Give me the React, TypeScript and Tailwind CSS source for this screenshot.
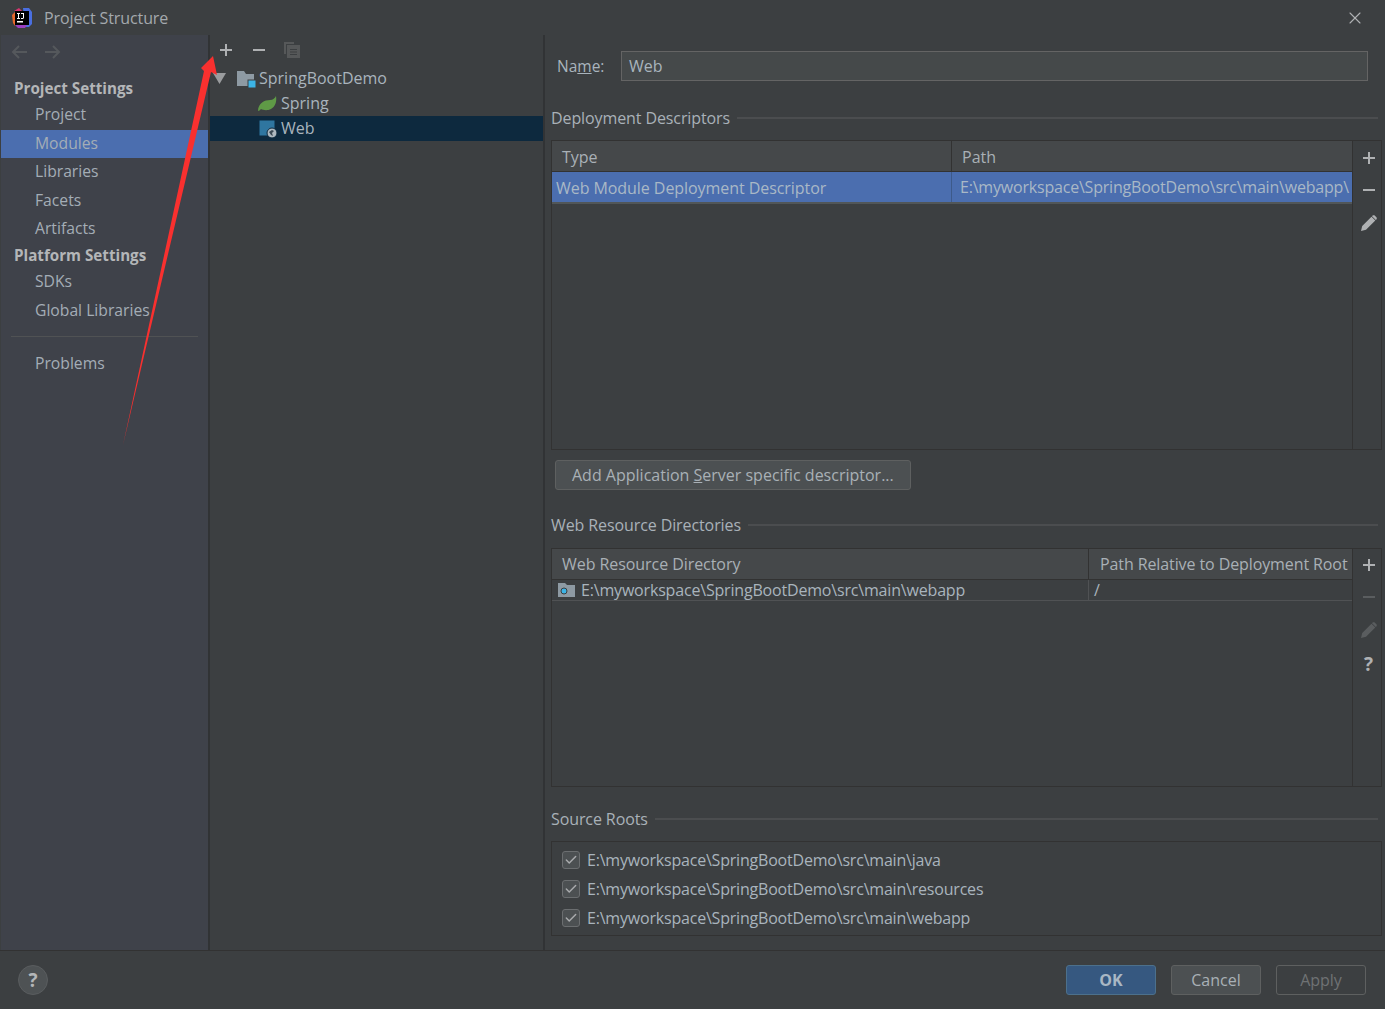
import { Check, X } from 'lucide-react'

const font = { fontFamily: '"Open Sans", "Noto Sans", sans-serif' }

function Plus({ dim = false }: { dim?: boolean }) {
  return (
    <svg width="16" height="16" viewBox="0 0 16 16" className={dim ? 'text-[#5a5d5f]' : 'text-[#afb1b3]'}>
      <path d="M7 2h2v5h5v2H9v5H7V9H2V7h5z" fill="currentColor" />
    </svg>
  )
}

function Minus({ dim = false }: { dim?: boolean }) {
  return (
    <svg width="16" height="16" viewBox="0 0 16 16" className={dim ? 'text-[#5a5d5f]' : 'text-[#afb1b3]'}>
      <path d="M2 7h12v2H2z" fill="currentColor" />
    </svg>
  )
}

function Pencil({ dim = false }: { dim?: boolean }) {
  return (
    <svg width="18" height="18" viewBox="0 0 18 18" className={dim ? 'text-[#5a5d5f]' : 'text-[#afb1b3]'}>
      <path d="M1 17l1.2-5L11.500 2.700l3.800 3.800L6 15.800zM12.600 1.600c.6-.6 1.500-.6 2.100 0l1.700 1.700c.6.6.6 1.500 0 2.100l-.6.6-3.800-3.800z" fill="currentColor" />
    </svg>
  )
}

function SectionTitle({ title }: { title: string }) {
  return (
    <div className="flex items-center h-5 mr-1">
      <span className="text-[16px] tracking-[-0.100px] text-[#a9b1b8] whitespace-nowrap">{title}</span>
      <div className="flex-1 h-[2px] bg-[#4b4d4f] ml-[7px]" />
    </div>
  )
}

function NavItem({ label, selected = false }: { label: string; selected?: boolean }) {
  return (
    <div className={`h-[28.500px] flex items-center pl-[34px] text-[15.700px] text-[#a4adb6] ${selected ? 'bg-[#4b6eaf]' : ''}`}>
      {label}
    </div>
  )
}

function NavHeading({ label }: { label: string }) {
  return <div className="h-[24.500px] flex items-center pl-[13px] text-[15.200px] font-bold text-[#b4b6b8]">{label}</div>
}

function SourceRoot({ path }: { path: string }) {
  return (
    <div className="h-[29px] flex items-center pl-[10px]">
      <div className="w-[18px] h-[18px] rounded-[3px] border border-[#6b6e70] bg-[#4c5052] flex items-center justify-center">
        <Check size={14} strokeWidth={2.500} className="text-[#a9abad]" />
      </div>
      <span className="ml-[7px] text-[16px] tracking-[-0.200px] text-[#a9b4bd] whitespace-nowrap">{path}</span>
    </div>
  )
}

export default function App() {
  return (
    <div className="relative w-[1385px] h-[1009px] overflow-hidden bg-[#3c3f41] flex flex-col" style={font}>
      {/* Title bar */}
      <div className="h-[35px] flex items-center shrink-0">
        <svg width="22" height="22" viewBox="0 0 22 22" className="ml-[11px]">
          <path d="M3 4l5-3 3 3H5z" fill="#d6356f" />
          <path d="M12 1h6l3 4v12l-3 3h-4z" fill="#4a6fe0" />
          <path d="M1 8l3-3v14l-2-3z" fill="#e8672b" />
          <path d="M4 18h12l-2 3H7z" fill="#9b3fc0" />
          <rect x="4" y="4" width="14" height="14" fill="#000" />
          <rect x="6" y="14" width="6" height="1.500" fill="#fff" />
          <path d="M6 6h3v1H8v4h1v1H6v-1h1V7H6zM10 6h3v5l-1 1h-2v-1h2V7h-2z" fill="#fff" />
        </svg>
        <span className="ml-[11px] text-[16px] tracking-[-0.100px] text-[#a4a9ad]">Project Structure</span>
        <X size={20} strokeWidth={1.300} className="ml-auto mr-[20px] text-[#b0b2b4]" />
      </div>

      {/* Body */}
      <div className="h-[915px] flex shrink-0">
        {/* Sidebar */}
        <div className="w-[207px] ml-px bg-[#3f424a] shrink-0">
          <div className="h-[41.500px] flex items-start pt-[10px] pl-[10px] gap-[16px] text-[#55585c]">
            <svg width="17" height="14" viewBox="0 0 17 14"><path d="M8 1L2 7l6 6M2 7h14" fill="none" stroke="currentColor" strokeWidth="2" /></svg>
            <svg width="17" height="14" viewBox="0 0 17 14"><path d="M9 1l6 6-6 6M15 7H1" fill="none" stroke="currentColor" strokeWidth="2" /></svg>
          </div>
          <NavHeading label="Project Settings" />
          <NavItem label="Project" />
          <NavItem label="Modules" selected />
          <NavItem label="Libraries" />
          <NavItem label="Facets" />
          <NavItem label="Artifacts" />
          <NavHeading label="Platform Settings" />
          <NavItem label="SDKs" />
          <NavItem label="Global Libraries" />
          <div className="h-px bg-[#505254] mx-[10px] mt-[11px] mb-[13px]" />
          <NavItem label="Problems" />
        </div>
        <div className="w-[2px] bg-[#313335] shrink-0" />

        {/* Module tree */}
        <div className="w-[333px] shrink-0">
          <div className="h-[30px] flex items-center pl-[8px] gap-[17px]">
            <Plus />
            <Minus />
            <svg width="18" height="18" viewBox="0 0 18 18" className="-ml-[1px]">
              <path d="M1 1h10v2H3v10H1z" fill="#565859" />
              <path d="M4 4h13v13H4z" fill="#565859" />
              <path d="M7 8h7v1H7zM7 10.500h7v1H7zM7 13h7v1H7z" fill="#3c3f41" />
            </svg>
          </div>
          <div className="h-[25px] mt-px flex items-center pl-[3px] text-[#a9b4bd] text-[16px]">
            <svg width="13" height="11" viewBox="0 0 13 11"><path d="M0 0h13L6.500 11z" fill="#9a9c9e" /></svg>
            <svg width="20" height="18" viewBox="0 0 20 18" className="ml-[10px]">
              <path d="M1 1h7l2 3h8v12H1z" fill="#8e9aa3" />
              <rect x="12" y="10" width="8" height="8" fill="#3cb4e6" stroke="#3c3f41" />
            </svg>
            <span className="ml-[3px] pb-[2px]">SpringBootDemo</span>
          </div>
          <div className="h-[25px] flex items-center pl-[48px] text-[#a9b4bd] text-[16px]">
            <svg width="19" height="16" viewBox="0 0 19 16">
              <path d="M0 15C0 7 7 4 12 4 15 4 17 2 18 0c1 6-1 11-5 13-4 2-8 1-10 0-1 1-2 2-3 2z" fill="#5f9a46" />
            </svg>
            <span className="ml-[4px] pb-px">Spring</span>
          </div>
          <div className="h-[25px] bg-[#0d293e] flex items-center pl-[49px] text-[#a9b4bd] text-[16px]">
            <div className="relative w-[17px] h-[18px]">
              <svg width="18" height="18" viewBox="0 0 18 18">
                <rect x="0.500" y="0.500" width="15" height="15" fill="#2f76a0" />
                <circle cx="13" cy="13" r="5" fill="#aeb8bf" stroke="#0d293e" />
                <path d="M10 12l3-2 2 1-2 2 1 3-2-1z" fill="#3c4a55" />
              </svg>
            </div>
            <span className="ml-[5px] pb-[2px]">Web</span>
          </div>
        </div>
        <div className="w-[2px] bg-[#313335] shrink-0" />

        {/* Details */}
        <div className="flex-1 pl-[6px] pr-[3px] min-w-0">
          <div className="h-[46px] flex items-end ml-[6px]">
            <span className="text-[15.500px] text-[#a9b4bd] h-[28px] flex items-center w-[64px]">
              Na<span className="underline">m</span>e:
            </span>
            <div className="w-[747px] h-[30px] bg-[#45494a] border border-[#646464] flex items-center pl-[7px] pb-px text-[16px] text-[#a9b4bd]">
              Web
            </div>
          </div>

          <div className="mt-[27px]"><SectionTitle title="Deployment Descriptors" /></div>
          <div className="mt-[12px] h-[310px] flex border border-[#323232]">
            <div className="flex-1 min-w-0">
              <div className="h-[31px] bg-[#45484a] border-b border-[#323232] flex text-[16px] text-[#a9b0b6]">
                <div className="w-[400px] flex items-center pl-[10px] pt-px border-r border-[#323232]">Type</div>
                <div className="flex-1 flex items-center pl-[10px] pt-px">Path</div>
              </div>
              <div className="h-[32px] bg-[#4b6eaf] border-b-2 border-[#515658] flex text-[16px] text-[#a9b8c6] whitespace-nowrap">
                <div className="w-[400px] flex items-center pl-[4px] pt-px tracking-[-0.060px] border-r border-[#3d5a8a]">Web Module Deployment Descriptor</div>
                <div className="flex-1 flex items-center pl-[8px] tracking-[-0.200px]">E:\myworkspace\SpringBootDemo\src\main\webapp\</div>
              </div>
            </div>
            <div className="w-[29px] shrink-0 border-l border-[#323232] flex flex-col items-center pl-[3px] pt-[9px] gap-[16px]">
              <Plus />
              <Minus />
              <Pencil />
            </div>
          </div>

          <button className="mt-[10px] ml-[4px] w-[356px] h-[30px] rounded-[3px] border border-[#5e6060] bg-[#4c5052] text-left pl-[16px] text-[16px] text-[#a9b0b6]">
            Add Application <span className="underline">S</span>erver specific descriptor...
          </button>

          <div className="mt-[25px]"><SectionTitle title="Web Resource Directories" /></div>
          <div className="mt-[13px] h-[239px] flex border border-[#323232]">
            <div className="flex-1 min-w-0">
              <div className="h-[31px] bg-[#45484a] border-b border-[#323232] flex text-[16px] text-[#a9b0b6] whitespace-nowrap">
                <div className="w-[537px] flex items-center pl-[10px] tracking-[-0.060px] border-r border-[#323232]">Web Resource Directory</div>
                <div className="flex-1 flex items-center pl-[11px] tracking-[-0.100px]">Path Relative to Deployment Root</div>
              </div>
              <div className="h-[21px] border-b border-[#505254] flex text-[16px] text-[#a9b4bd] whitespace-nowrap">
                <div className="w-[537px] flex items-center pl-[5px] border-r border-[#505254]">
                  <svg width="19" height="14" viewBox="0 0 19 14">
                    <path d="M1 0h7l2 2h8v12H1z" fill="#8e9aa3" />
                    <circle cx="7" cy="8" r="3" fill="#3cb4e6" stroke="#3c3f41" />
                  </svg>
                  <span className="ml-[5px] tracking-[-0.180px]">E:\myworkspace\SpringBootDemo\src\main\webapp</span>
                </div>
                <div className="flex-1 flex items-center pl-[5px]">/</div>
              </div>
            </div>
            <div className="w-[29px] shrink-0 border-l border-[#323232] flex flex-col items-center pl-[3px] pt-[8px] gap-[16px]">
              <Plus />
              <Minus dim />
              <Pencil dim />
              <span className="text-[19px] leading-[18px] font-bold text-[#afb1b3]">?</span>
            </div>
          </div>

          <div className="mt-[22px]"><SectionTitle title="Source Roots" /></div>
          <div className="mt-[12px] h-[95px] border border-[#323232] pt-[3px]">
            <SourceRoot path="E:\myworkspace\SpringBootDemo\src\main\java" />
            <SourceRoot path="E:\myworkspace\SpringBootDemo\src\main\resources" />
            <SourceRoot path="E:\myworkspace\SpringBootDemo\src\main\webapp" />
          </div>
        </div>
      </div>

      {/* Footer */}
      <div className="flex-1 border-t border-[#323232] flex items-center pl-[18px] pr-[19px]">
        <div className="w-[30px] h-[30px] rounded-full bg-[#4e5254] border border-[#5a5d5f] flex items-center justify-center text-[19px] font-bold text-[#b4b6b8]">?</div>
        <div className="ml-auto flex gap-[15px]">
          <button className="w-[90px] h-[30px] rounded-[3px] border border-[#4c708c] bg-[#365880] text-[16px] font-bold text-[#a9b7c4]">OK</button>
          <button className="w-[90px] h-[30px] rounded-[3px] border border-[#5e6060] bg-[#4c5052] text-[16px] text-[#a9b0b6]">Cancel</button>
          <button className="w-[90px] h-[30px] rounded-[3px] border border-[#5e6060] text-[16px] text-[#6f7274]">Apply</button>
        </div>
      </div>

      {/* Red annotation arrow */}
      <svg width="1385" height="1009" className="absolute inset-0 pointer-events-none">
        <path d="M123 445L204 71 L201 68 L213 56 L217 75 L211 72z" fill="#f9302f" />
      </svg>
    </div>
  )
}
